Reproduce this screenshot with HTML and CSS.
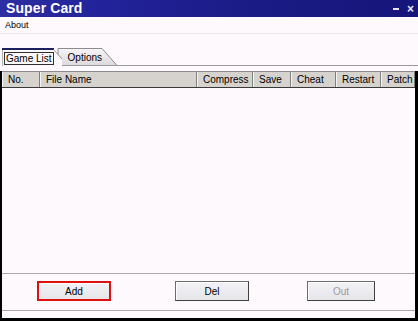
FILE: index.html
```html
<!DOCTYPE html>
<html>
<head>
<meta charset="utf-8">
<link rel="stylesheet" href="styles.css">
</head>
<body>
<div class="window">
  <div class="titlebar">
    <span class="title">Super Card</span>
    <span class="tb-btns"><span class="tb-min"></span><span class="tb-close">×</span></span>
  </div>
  <div class="menubar"><span class="menu-item">About</span></div>
  <div class="spacer"></div>
  <div class="tabstrip">
    <svg class="tabshapes" width="418" height="19" viewBox="0 0 418 19">
      <defs>
        <linearGradient id="tg" x1="0" y1="0" x2="0" y2="1">
          <stop offset="0" stop-color="#f6f4f6"/>
          <stop offset="1" stop-color="#dcdadc"/>
        </linearGradient>
      </defs>
      <path d="M58 18.5 V1.5 H102 L117 18.5" fill="url(#tg)" stroke="#8c8c8c" stroke-width="1"/>
      <line x1="58" y1="18.5" x2="418" y2="18.5" stroke="#9a9a9a" stroke-width="1"/>
      <path d="M2.5 19 V2 H53 L62 12 V19 Z" fill="#fdf9fd"/>
      <line x1="2.5" y1="3" x2="2.5" y2="19" stroke="#b0b0b0" stroke-width="1"/>
      <line x1="2" y1="2" x2="54" y2="2" stroke="#1a2060" stroke-width="2"/>
      <line x1="53.5" y1="2.5" x2="62" y2="12" stroke="#909090" stroke-width="1"/>
    </svg>
    <div class="tab tab-active"><span class="focus">Game List</span></div>
    <div class="tab tab-options">Options</div>
  </div>
  <div class="panel">
    <div class="header">
      <div class="hcell">No.</div>
      <div class="hcell">File Name</div>
      <div class="hcell">Compress</div>
      <div class="hcell">Save</div>
      <div class="hcell">Cheat</div>
      <div class="hcell">Restart</div>
      <div class="hcell">Patch</div>
    </div>
    <div class="list"></div>
    <div class="buttons">
      <button class="btn btn-add">Add</button>
      <button class="btn btn-del">Del</button>
      <button class="btn btn-out" disabled>Out</button>
    </div>
    <div class="foot"></div>
  </div>
</div>
</body>
</html>
```
FILE: styles.css
```css
html, body {
  margin: 0;
  padding: 0;
  background: #fdf9fd;
}
.window {
  width: 418px;
  height: 321px;
  display: flex;
  flex-direction: column;
  font-family: "Liberation Sans", Arial, sans-serif;
  background: #fdf9fd;
  overflow: hidden;
}
.titlebar {
  height: 17px;
  flex: none;
  display: flex;
  align-items: center;
  justify-content: space-between;
  background: linear-gradient(90deg, #2e2ea2 0%, #22229a 25%, #1b1b86 60%, #15157a 100%);
  color: #fff;
  padding: 0 6px;
}
.title {
  font-weight: bold;
  font-size: 14px;
  line-height: 17px;
  letter-spacing: 0.1px;
}
.tb-btns {
  display: flex;
  align-items: center;
  gap: 8px;
  margin-right: -2px;
}
.tb-min {
  width: 6px;
  height: 2px;
  background: #e8e8f4;
  margin-top: 1px;
}
.tb-close {
  font-size: 12px;
  font-weight: bold;
  line-height: 12px;
  color: #e8e8f4;
}
.menubar {
  height: 16px;
  flex: none;
  display: flex;
  align-items: center;
  padding-left: 5px;
  font-size: 9px;
  color: #000;
}
.spacer {
  height: 14px;
  flex: none;
  border-top: 1px solid #ebe6eb;
  box-sizing: border-box;
}
.tabstrip {
  position: relative;
  height: 19px;
  flex: none;
  display: flex;
  align-items: flex-start;
}
.tabshapes {
  position: absolute;
  left: 0;
  top: 0;
}
.tab {
  position: relative;
  font-size: 10px;
  color: #000;
}
.tab-active {
  margin-left: 4px;
  margin-top: 5px;
}
.focus {
  display: block;
  border: 1px solid #303030;
  padding: 0 1px;
  height: 11px;
  line-height: 11px;
  white-space: nowrap;
}
.tab-options {
  margin-left: 14px;
  margin-top: 4px;
  line-height: 13px;
}
.panel {
  margin-top: 5px;
  flex: 1;
  display: flex;
  flex-direction: column;
  border-left: 2px solid #000;
  border-right: 3px solid #000;
  border-bottom: 3px solid #000;
  background: #fdf9fd;
}
.header {
  height: 17px;
  flex: none;
  display: grid;
  grid-template-columns: 38px 157px 56px 38px 45px 45px 34px;
  background: #d6d3ce;
  border-top: 1px solid #8a8a8a;
  border-bottom: 1px solid #3a3a3a;
  box-sizing: border-box;
}
.hcell {
  font-size: 10px;
  line-height: 15px;
  padding-left: 5px;
  border-left: 1px solid #f4f4f4;
  border-right: 1px solid #808080;
  white-space: nowrap;
  overflow: hidden;
  color: #000;
}
.list {
  flex: 1;
  background: #fdf9fd;
}
.buttons {
  flex: none;
  box-sizing: border-box;
  border-top: 1px solid #a8a8a8;
  border-bottom: 1px solid #a8a8a8;
  height: 38px;
  display: flex;
  align-items: flex-start;
  padding-left: 35px;
  padding-top: 7px;
}
.btn {
  height: 20px;
  padding: 0;
  font-family: "Liberation Sans", Arial, sans-serif;
  font-size: 10px;
  color: #000;
  background: linear-gradient(180deg, #f2f2f6 0%, #e6e6ea 100%);
  border: 1px solid #6c6c6c;
  border-right-color: #404040;
  border-bottom-color: #404040;
  box-shadow: inset 1px 1px 0 #ffffff;
}
.btn-add {
  width: 74px;
  border: 2px solid #e01010;
}
.btn-del {
  width: 74px;
  margin-left: 64px;
}
.btn-out {
  width: 68px;
  margin-left: 58px;
  color: #9a9a9a;
}
.foot {
  height: 7px;
  flex: none;
}
```
